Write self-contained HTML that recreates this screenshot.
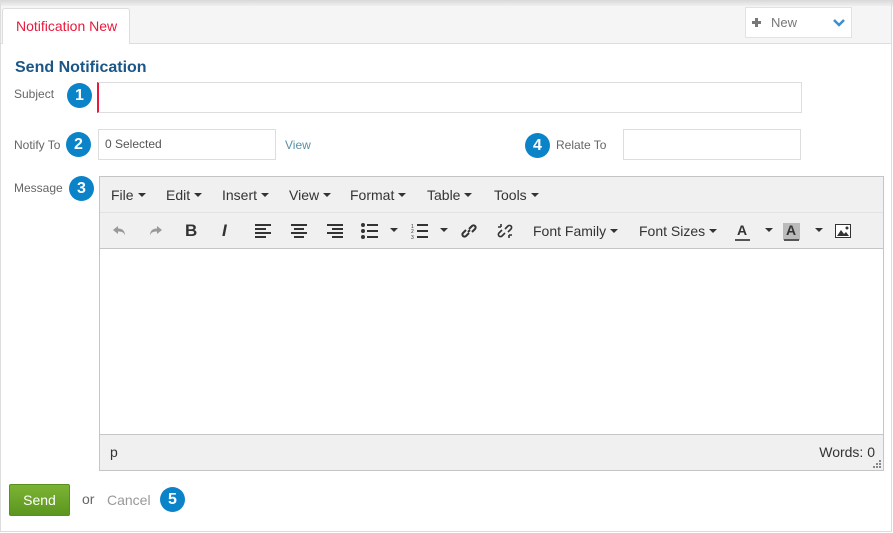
<!DOCTYPE html>
<html><head><meta charset="utf-8">
<style>
*{box-sizing:border-box;margin:0;padding:0}
body{width:893px;height:533px;background:#fff;font-family:"Liberation Sans",Arial,sans-serif;position:relative;overflow:hidden}
.a{position:absolute}
.frame{left:0;top:0;width:892px;height:532px;border:1px solid #ddd;border-top:none}
.topsh{left:0;top:0;width:893px;height:7px;background:linear-gradient(#d8d8d8,#f3f3f3)}
.tabbar{left:1px;top:6px;width:890px;height:38px;background:#f5f5f5;border-bottom:1px solid #ddd}
.tab{left:2px;top:8px;width:128px;height:36px;background:#fff;border:1px solid #ddd;border-bottom:none;border-radius:3px 3px 0 0;color:#e8193c;font-size:14px;line-height:34px;padding-left:13px}
.newb{left:745px;top:7px;width:107px;height:31px;background:#fff;border:1px solid #e2e2e2;font-size:13px;color:#777;line-height:29px;padding-left:25px}
.badge{width:25px;height:25px;border-radius:50%;background:#0b83c9;color:#fff;font-weight:bold;font-size:16px;text-align:center;line-height:25px}
.lbl{font-size:12px;color:#666}
.inp{border:1px solid #ddd;background:#fff}
.ed{left:99px;top:176px;width:785px;height:295px;border:1px solid #c5c5c5;background:#fff}
.mb{left:0;top:0;width:783px;height:36px;background:#f0f0f0;border-bottom:1px solid #e2e2e2;font-size:14px;color:#333}
.mb span,.tb span{position:absolute;top:0;line-height:36px}
.tb{left:0;top:36px;width:783px;height:36px;background:#f0f0f0;border-bottom:1px solid #c5c5c5;font-size:14px;color:#333}
.car{display:inline-block;width:0;height:0;border-left:4px solid transparent;border-right:4px solid transparent;border-top:4px solid #333;vertical-align:middle;margin-left:4px;margin-top:-2px}
.sb{left:0;top:257px;width:783px;height:36px;background:#f0f0f0;border-top:1px solid #c5c5c5;font-size:14px;color:#333}
svg{position:absolute}
</style></head><body>
<div class="a topsh"></div>
<div class="a tabbar"></div>
<div class="a frame"></div>
<div class="a tab">Notification New</div>
<div class="a newb"><svg style="left:6px;top:10px" width="9" height="9"><path d="M3 0h3v3h3v3H6v3H3V6H0V3h3z" fill="#777"/></svg>New<svg style="left:87px;top:11px" width="12" height="8"><path d="M1 1l5 5 5-5" stroke="#3b8fd0" stroke-width="2.5" fill="none"/></svg></div>

<div class="a" style="left:15px;top:59px;font-size:16px;font-weight:bold;color:#1b5687">Send Notification</div>

<div class="a lbl" style="left:14px;top:87px">Subject</div>
<div class="a badge" style="left:67px;top:83px">1</div>
<div class="a inp" style="left:97px;top:82px;width:705px;height:31px;border-left:2px solid #e8193c"></div>

<div class="a lbl" style="left:14px;top:138px">Notify To</div>
<div class="a badge" style="left:66px;top:132px">2</div>
<div class="a inp" style="left:98px;top:129px;width:178px;height:31px;font-size:12px;color:#555;line-height:29px;padding-left:6px">0 Selected</div>
<div class="a lbl" style="left:285px;top:138px;color:#5a8fa8">View</div>

<div class="a badge" style="left:525px;top:133px">4</div>
<div class="a lbl" style="left:556px;top:138px">Relate To</div>
<div class="a inp" style="left:623px;top:129px;width:178px;height:31px"></div>

<div class="a lbl" style="left:14px;top:181px">Message</div>
<div class="a badge" style="left:69px;top:176px">3</div>

<div class="a ed">
 <div class="a mb">
  <span style="left:11px">File<i class="car"></i></span>
  <span style="left:66px">Edit<i class="car"></i></span>
  <span style="left:122px">Insert<i class="car"></i></span>
  <span style="left:189px">View<i class="car"></i></span>
  <span style="left:250px">Format<i class="car"></i></span>
  <span style="left:327px">Table<i class="car"></i></span>
  <span style="left:394px">Tools<i class="car"></i></span>
 </div>
 <div class="a tb">
  <svg style="left:12px;top:11px" width="16" height="14"><path d="M6 2L1 6l5 4V7.5c4 0 6 1 7 4 0-4-2-7-7-7z" fill="#999"/></svg>
  <svg style="left:47px;top:11px" width="16" height="14"><path d="M10 2l5 4-5 4V7.5c-4 0-6 1-7 4 0-4 2-7 7-7z" fill="#999"/></svg>
  <span style="left:85px;font-weight:bold;font-size:17px">B</span>
  <span style="left:122px;font-style:italic;font-weight:bold;font-size:17px">I</span>
  <svg style="left:155px;top:11px" width="16" height="14"><path d="M0 1h16M0 5h11M0 9h16M0 13h11" stroke="#333" stroke-width="2"/></svg>
  <svg style="left:191px;top:11px" width="16" height="14"><path d="M0 1h16M3 5h10M0 9h16M3 13h10" stroke="#333" stroke-width="2"/></svg>
  <svg style="left:227px;top:11px" width="16" height="14"><path d="M0 1h16M5 5h11M0 9h16M5 13h11" stroke="#333" stroke-width="2"/></svg>
  <svg style="left:261px;top:10px" width="18" height="16"><circle cx="2" cy="2" r="2" fill="#333"/><circle cx="2" cy="8" r="2" fill="#333"/><circle cx="2" cy="14" r="2" fill="#333"/><path d="M6 2h11M6 8h11M6 14h11" stroke="#333" stroke-width="2"/></svg>
  <i class="car a" style="left:286px;top:17px"></i>
  <svg style="left:311px;top:10px" width="18" height="16"><text x="0" y="5" font-size="5" fill="#333">1</text><text x="0" y="10" font-size="5" fill="#333">2</text><text x="0" y="16" font-size="5" fill="#333">3</text><path d="M6 2h11M6 8h11M6 14h11" stroke="#333" stroke-width="2"/></svg>
  <i class="car a" style="left:336px;top:17px"></i>
  <svg style="left:361px;top:10px" width="16" height="16"><path d="M7 9l2-2M5 7l-3 3a2 2 0 003 3l3-3M11 9l3-3a2 2 0 00-3-3L8 6" stroke="#333" stroke-width="2" fill="none"/></svg>
  <svg style="left:397px;top:10px" width="16" height="16"><path d="M5 7l-3 3a2 2 0 003 3l3-3M11 9l3-3a2 2 0 00-3-3L8 6M4 1v3M1 4h3M12 12v3M12 12h3" stroke="#333" stroke-width="1.6" fill="none"/></svg>
  <span style="left:433px">Font Family<i class="car"></i></span>
  <span style="left:539px">Font Sizes<i class="car"></i></span>
  <span style="left:637px;font-weight:bold;line-height:34px">A</span><div class="a" style="left:635px;top:26px;width:15px;height:2px;background:#555"></div>
  <i class="car a" style="left:661px;top:17px"></i>
  <div class="a" style="left:683px;top:10px;width:17px;height:17px;background:#bbb"></div><span style="left:686px;font-weight:bold;line-height:34px">A</span><div class="a" style="left:684px;top:26px;width:15px;height:2px;background:#555"></div>
  <i class="car a" style="left:711px;top:17px"></i>
  <svg style="left:735px;top:11px" width="16" height="14"><rect x="0.5" y="0.5" width="15" height="13" fill="#fff" stroke="#333"/><path d="M2 12l4-6 3 4 2-2 3 4z" fill="#333"/><circle cx="12" cy="4" r="1.5" fill="#333"/></svg>
 </div>
 <div class="a sb"><span class="a" style="left:10px;top:9px">p</span><span class="a" style="right:8px;top:9px">Words: 0</span>
  <svg style="right:2px;bottom:2px" width="8" height="8"><path d="M6 0h2v2H6zM3 3h2v2H3zM6 3h2v2H6zM0 6h2v2H0zM3 6h2v2H3zM6 6h2v2H6z" fill="#888"/></svg></div>
</div>

<div class="a" style="left:9px;top:484px;width:61px;height:32px;background:linear-gradient(#7ab434,#5d961e);border:1px solid #5a8f1f;border-radius:2px;color:#fff;font-size:14px;text-align:center;line-height:30px">Send</div>
<div class="a" style="left:82px;top:491px;font-size:14px;color:#666">or</div>
<div class="a" style="left:107px;top:492px;font-size:14px;color:#999">Cancel</div>
<div class="a badge" style="left:160px;top:487px">5</div>
</body></html>
